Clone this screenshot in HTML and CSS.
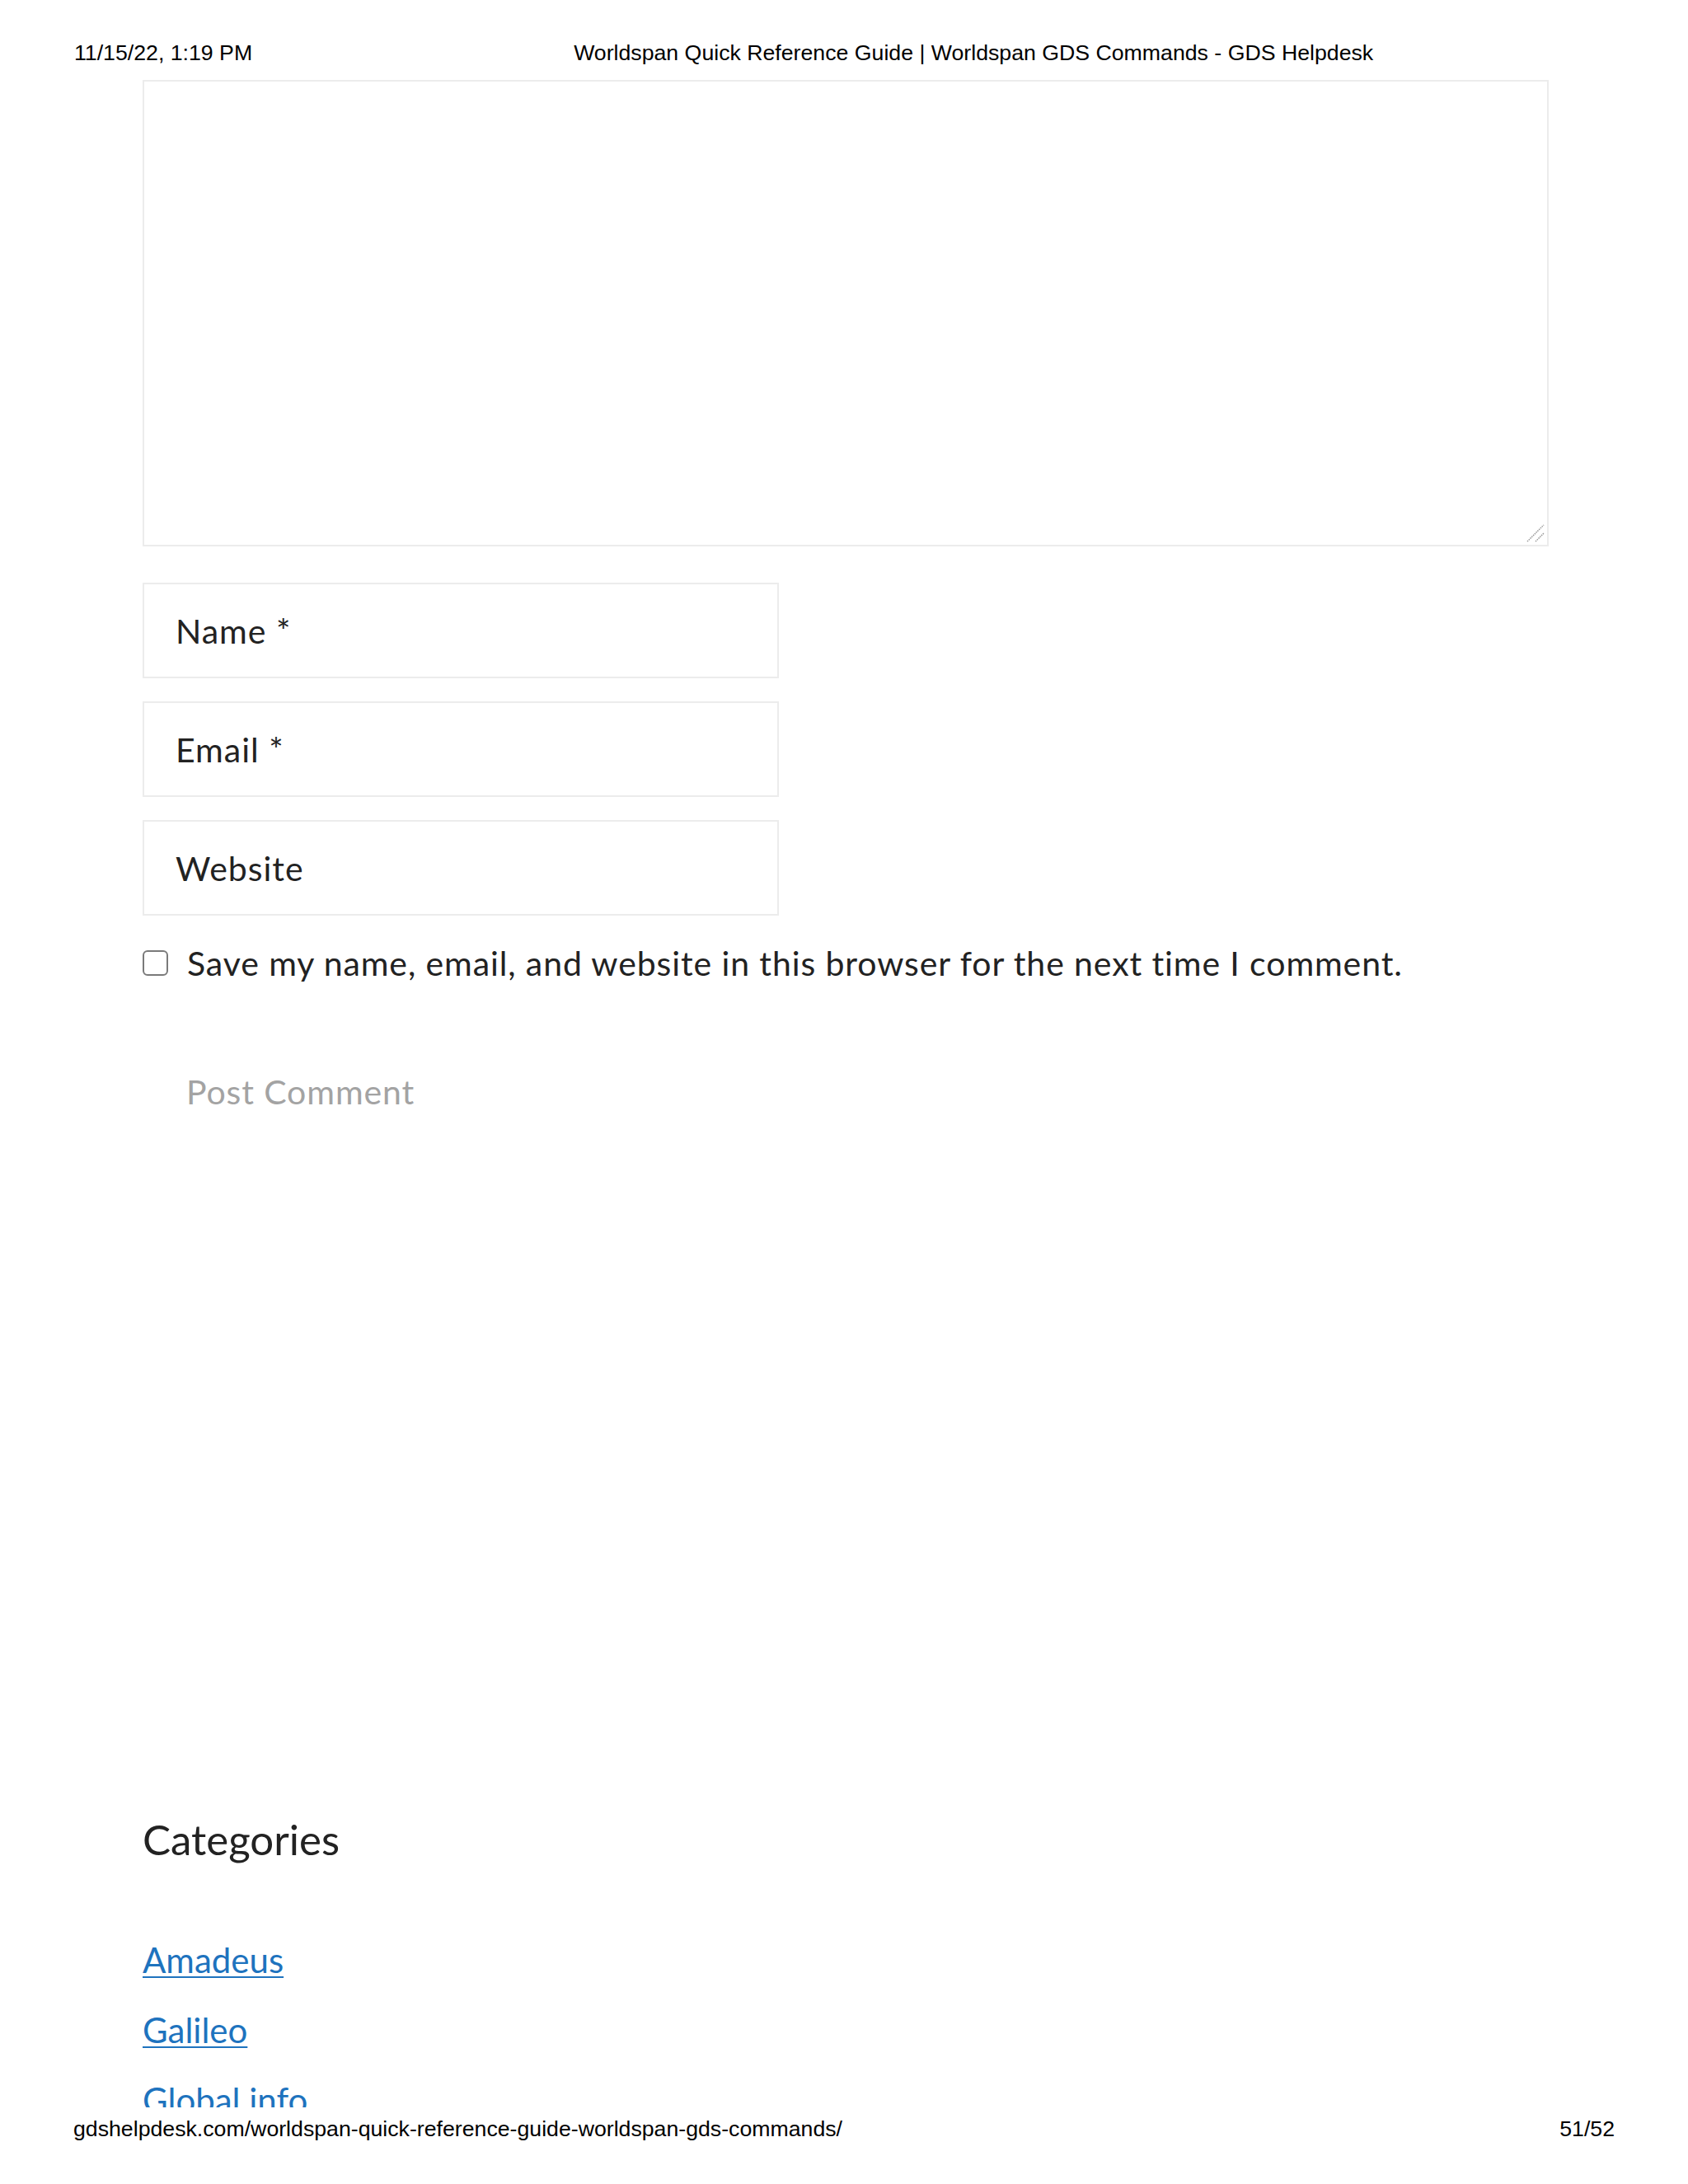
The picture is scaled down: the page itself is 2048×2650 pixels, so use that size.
FILE: index.html
```
<!DOCTYPE html>
<html lang="en">
<head>
<meta charset="utf-8">
<title>Worldspan Quick Reference Guide | Worldspan GDS Commands - GDS Helpdesk</title>
<link rel="stylesheet" href="styles.css">
</head>
<body>
<header class="print-head">
  <span class="print-date">11/15/22, 1:19 PM</span>
  <span class="print-title">Worldspan Quick Reference Guide | Worldspan GDS Commands - GDS Helpdesk</span>
</header>
<main class="sheet">
  <div class="column">
    <form class="comment-form">
      <div class="text-wrap">
        <textarea class="comment-text" aria-label="Comment"></textarea>
        <svg class="grip" width="24" height="24" viewBox="0 0 24 24" aria-hidden="true">
          <line x1="2" y1="22" x2="22" y2="2" stroke="#9a9a9a" stroke-width="1.5" stroke-dasharray="1.5 1"/>
          <line x1="12" y1="22" x2="22" y2="12" stroke="#9a9a9a" stroke-width="1.5" stroke-dasharray="1.5 1"/>
        </svg>
      </div>
      <input class="field" type="text" placeholder="Name *">
      <input class="field" type="email" placeholder="Email *">
      <input class="field" type="url" placeholder="Website">
      <label class="consent">
        <input class="consent-box" type="checkbox">
        <span class="consent-text">Save my name, email, and website in this browser for the next time I comment.</span>
      </label>
      <button class="submit" type="button">Post Comment</button>
    </form>
    <section class="widget">
      <h2 class="widget-title">Categories</h2>
      <ul class="cat-list">
        <li><a href="#">Amadeus</a></li>
        <li><a href="#">Galileo</a></li>
        <li><a href="#">Global info</a></li>
        <li><a href="#">Sabre</a></li>
      </ul>
    </section>
  </div>
</main>
<footer class="print-foot">
  <span class="print-url">gdshelpdesk.com/worldspan-quick-reference-guide-worldspan-gds-commands/</span>
  <span class="print-page">51/52</span>
</footer>
</body>
</html>
```
FILE: styles.css
```
* {
  box-sizing: border-box;
}

html, body {
  margin: 0;
  padding: 0;
  background: #ffffff;
}

body {
  width: 2048px;
  height: 2650px;
  overflow: hidden;
}

.print-head {
  display: flex;
  height: 97px;
  padding: 49px 89px 0 90px;
  font-family: "Liberation Sans", Arial, sans-serif;
  font-size: 26.7px;
  line-height: 30px;
  color: #000;
}

.print-title {
  margin-left: 390px;
  white-space: nowrap;
}

.sheet {
  height: 2460px;
  overflow: hidden;
  padding-left: 173px;
  font-family: Lato, "Open Sans", sans-serif;
  color: #222222;
}

.column {
  width: 1706px;
}

.comment-form {
  display: flex;
  flex-direction: column;
  align-items: flex-start;
}

.text-wrap {
  position: relative;
  width: 1706px;
  height: 566px;
}

.comment-text {
  display: block;
  width: 1706px;
  height: 566px;
  margin: 0;
  border: 2px solid #ececec;
  background: #fff;
  resize: none;
  font: inherit;
}

.grip {
  position: absolute;
  right: 4px;
  bottom: 4px;
}

.field {
  display: block;
  width: 772px;
  height: 116px;
  margin: 28px 0 0;
  padding: 0 0 0 38px;
  border: 2px solid #ececec;
  background: #fff;
  font-family: Lato, "Open Sans", sans-serif;
  font-size: 41px;
  letter-spacing: 1px;
  color: #222;
}

.text-wrap + .field {
  margin-top: 44px;
}

.field::placeholder {
  color: #222222;
  opacity: 1;
}

.consent {
  display: flex;
  align-items: flex-start;
  margin-top: 34px;
  font-size: 41px;
  line-height: 48px;
  letter-spacing: 0.9px;
}

.consent-box {
  appearance: none;
  -webkit-appearance: none;
  width: 31px;
  height: 31px;
  margin: 8px 23px 0 0;
  flex: none;
  border: 2px solid #7a7a7a;
  border-radius: 6px;
  background: #fff;
}

.consent-text {
  white-space: nowrap;
}

.submit {
  margin-top: 108px;
  padding: 0 0 0 53px;
  border: 0;
  background: transparent;
  font-family: Lato, "Open Sans", sans-serif;
  font-size: 41px;
  line-height: 48px;
  letter-spacing: 0.9px;
  color: #a3a3a3;
}

.widget {
  margin-top: 853px;
}

.widget-title {
  margin: 0;
  font-size: 51px;
  font-weight: 400;
  line-height: 60px;
  color: #222;
}

.cat-list {
  list-style: none;
  margin: 74px 0 0;
  padding: 0;
}

.cat-list li {
  font-size: 42px;
  line-height: 85px;
}

.cat-list a {
  color: #1e73be;
  text-decoration: underline;
  text-decoration-thickness: 2px;
  text-underline-offset: 4px;
}

.print-foot {
  display: flex;
  justify-content: space-between;
  padding: 11px 89px 0 89px;
  font-family: "Liberation Sans", Arial, sans-serif;
  font-size: 26.7px;
  line-height: 30px;
  color: #000;
}
```
